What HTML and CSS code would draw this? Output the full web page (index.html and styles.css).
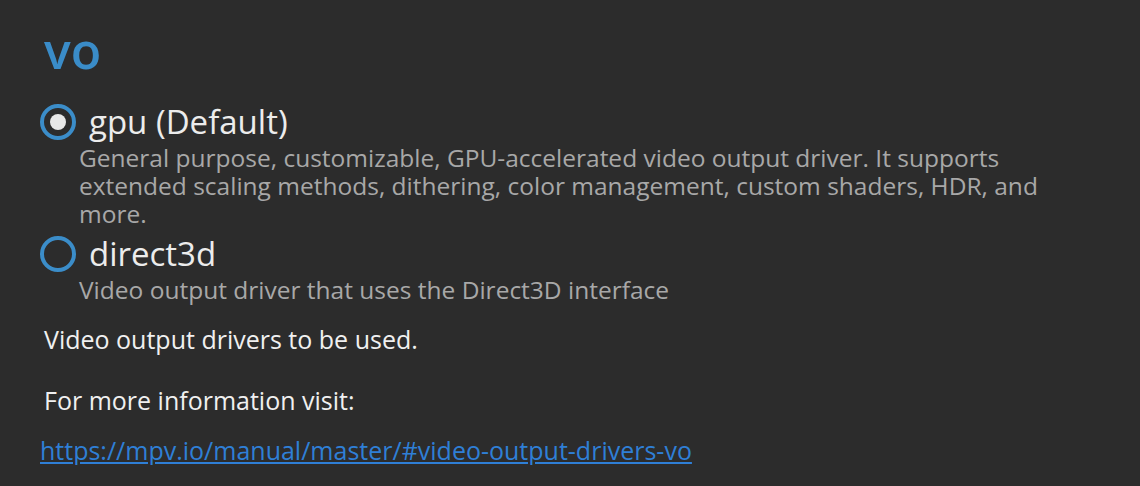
FILE: index.html
```html
<!DOCTYPE html>
<html>
<head>
<meta charset="utf-8">
<link rel="stylesheet" href="styles.css">
</head>
<body>
<main class="setting">
  <h1 class="title">vo</h1>
  <div class="options">
    <div class="option">
      <div class="option-head">
        <span class="radio checked"></span>
        <span class="option-name">gpu (Default)</span>
      </div>
      <p class="option-desc">General purpose, customizable, GPU-accelerated video output driver. It supports extended scaling methods, dithering, color management, custom shaders, HDR, and more.</p>
    </div>
    <div class="option">
      <div class="option-head">
        <span class="radio"></span>
        <span class="option-name">direct3d</span>
      </div>
      <p class="option-desc">Video output driver that uses the Direct3D interface</p>
    </div>
  </div>
  <p class="help">Video output drivers to be used.</p>
  <p class="help more">For more information visit:</p>
  <a class="link" href="#">https://mpv.io/manual/master/#video-output-drivers-vo</a>
</main>
</body>
</html>
```

FILE: styles.css
```css
html, body {
  margin: 0;
  padding: 0;
  background: #2c2c2c;
}
body {
  font-family: "Open Sans", "Noto Sans", sans-serif;
  color: #e6e6e6;
}
.setting {
  padding: 20px 0 0 40px;
  width: 1029px;
}
.title {
  margin: 0 0 0 4px;
  font-size: 50px;
  font-weight: 600;
  color: #3a8cc8;
  line-height: 60px;
}
.options {
  margin-top: 23px;
  display: flex;
  flex-direction: column;
  gap: 7px;
}
.option-head {
  display: flex;
  align-items: center;
  gap: 13px;
  height: 38px;
}
.radio {
  width: 28px;
  height: 28px;
  border: 4px solid #3b8dc9;
  border-radius: 50%;
  display: flex;
  align-items: center;
  justify-content: center;
  flex: none;
}
.radio.checked::after {
  content: "";
  width: 16px;
  height: 16px;
  border-radius: 50%;
  background: #e8e8e8;
}
.option-name {
  font-size: 33px;
  line-height: 38px;
  color: #ececec;
}
.option-desc {
  margin: 3px 0 0 39px;
  font-size: 24.5px;
  line-height: 28px;
  color: #a8a8a8;
}
.help {
  margin: 20px 0 0 4px;
  font-size: 25px;
  line-height: 30px;
  color: #f0f0f0;
}
.help.more {
  margin-top: 31px;
}
.link {
  display: inline-block;
  margin-top: 20px;
  font-size: 25px;
  line-height: 30px;
  color: #2f7fd6;
  text-decoration: underline;
}
```
